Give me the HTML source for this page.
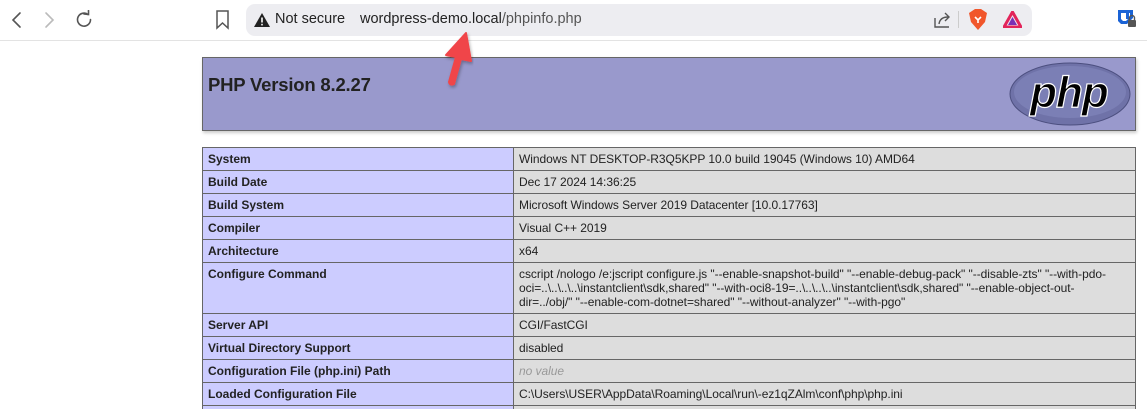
<!DOCTYPE html>
<html><head><meta charset="utf-8">
<style>
html,body{margin:0;padding:0;width:1147px;height:409px;overflow:hidden;background:#fff;font-family:"Liberation Sans",Arial,sans-serif;position:relative}
.bar{position:absolute;left:0;top:0;width:1147px;height:40px;background:#fff;border-bottom:1px solid #e3e3e3}
.pill{position:absolute;left:246px;top:4px;width:786px;height:32px;border-radius:9px;background:#ededf1}
.ns{position:absolute;left:275px;top:11px;font-size:14.5px;color:#222}
.url{position:absolute;left:360px;top:11px;font-size:14.5px;color:#222}
.url span{color:#555}
.head{position:absolute;left:202px;top:57px;width:932px;height:72px;background:#9999cc;border:1px solid #666;box-shadow:1px 2px 3px #ccc}
.head h1{margin:0;position:absolute;left:5px;top:16px;font-size:18.5px;font-weight:bold;color:#222;letter-spacing:-0.2px}
table{position:absolute;left:202px;top:147px;border-collapse:collapse;width:934px;font-size:12px;letter-spacing:-0.05px}
td{border:1px solid #666;padding:4px 5px 4px 5px;vertical-align:top;height:14px;line-height:14px;color:#222}
td.e{background:#ccf;font-weight:bold;width:300px;letter-spacing:0}
td.v{background:#ddd}
i{color:#999}
</style></head><body>
<div class="bar">
<svg style="position:absolute;left:8px;top:10px" width="100" height="20" viewBox="0 0 100 20" fill="none" stroke-width="1.6" stroke-linecap="round">
<path d="M12 3 L5 10 L12 17" stroke="#555"/>
<path d="M38 3 L45 10 L38 17" stroke="#bbb"/>
<path d="M80 4.5 A6.5 6.5 0 1 0 82.5 9.5" stroke="#555"/><path d="M76 4 L80.5 4.5 L80.5 0.5" stroke="#555"/>
</svg>
<svg style="position:absolute;left:214px;top:9px" width="18" height="22" viewBox="0 0 18 22" fill="none" stroke="#555" stroke-width="1.5"><path d="M3 2 H14 V19 L8.5 14 L3 19 Z"/></svg>
<div class="pill"></div>
<svg style="position:absolute;left:254px;top:13px" width="16" height="14" viewBox="0 0 16 14"><path d="M8 0 L16 14 H0 Z" fill="#222"/><rect x="7.2" y="4.5" width="1.6" height="5" fill="#fff"/><rect x="7.2" y="10.8" width="1.6" height="1.6" fill="#fff"/></svg>
<div class="ns">Not secure</div>
<div class="url">wordpress-demo.local<span>/phpinfo.php</span></div>
<svg style="position:absolute;left:933px;top:11px" width="20" height="18" viewBox="0 0 20 18" fill="none" stroke="#555" stroke-width="1.4"><path d="M2 7 V16 H16"/><path d="M6 13 Q7 6 15 6"/><path d="M12 2 L16 6 L12 10"/></svg>
<div style="position:absolute;left:958px;top:11px;width:1px;height:17px;background:#ccc"></div>
<svg style="position:absolute;left:969px;top:9px" width="18" height="21" viewBox="0 0 18 21"><path d="M3 2 L6 0 H12 L15 2 L18 4 L16 13 L9 21 L2 13 L0 4 Z" fill="#f1562b"/><path d="M6 8 L9 11 L12 8 M9 11 V14" stroke="#fff" stroke-width="1.6" fill="none"/></svg>
<svg style="position:absolute;left:1003px;top:11px" width="19" height="17" viewBox="0 0 19 17"><path d="M9.5 1 L18 16 H1 Z" fill="none" stroke="#e2245a" stroke-width="3"/><path d="M9.5 6 L14 14 H5 Z" fill="#7a2fb5"/></svg>
<svg style="position:absolute;left:1117px;top:9px" width="19" height="19" viewBox="0 0 19 19"><path d="M1 1 H16 V9 L10 15 H4 L1 12 Z" fill="#1a63d6"/><path d="M4 4 H13 V8 L9 12 H6 L4 10 Z" fill="#fff"/><rect x="9" y="4" width="3" height="6" fill="#1a63d6"/><rect x="11" y="11" width="8" height="7" rx="1" fill="#555"/><path d="M12.5 11 V9 A2.5 2.5 0 0 1 17.5 9 V11" stroke="#555" stroke-width="1.4" fill="none"/></svg>
</div>
<div class="head"><h1>PHP Version 8.2.27</h1>
<svg style="position:absolute;left:806px;top:4px" width="122" height="64" viewBox="0 0 122 64"><ellipse cx="61" cy="32" rx="60" ry="31" fill="#6f72a8" stroke="#4c4f7f" stroke-width="1"/><ellipse cx="61" cy="30" rx="56" ry="26" fill="#7b7fb5"/><text x="60" y="45" text-anchor="middle" font-family="Liberation Sans,Arial,sans-serif" font-size="44" font-weight="bold" font-style="italic" fill="#000" stroke="#fff" stroke-width="1.2" letter-spacing="-1">php</text></svg>
</div>
<svg style="position:absolute;left:0;top:0;pointer-events:none" width="1147" height="409"><g filter="url(#s)"><path d="M466 33 L446 55 L456 57 L449 82 Q450 86 454 84 L461 59 L471 61 Z" fill="#f0454a" stroke="#f0454a" stroke-linejoin="round" stroke-width="2"/></g><defs><filter id="s"><feDropShadow dx="1" dy="2" stdDeviation="1.5" flood-opacity="0.3"/></filter></defs></svg>
<table>
<tr><td class="e">System</td><td class="v">Windows NT DESKTOP-R3Q5KPP 10.0 build 19045 (Windows 10) AMD64</td></tr>
<tr><td class="e">Build Date</td><td class="v">Dec 17 2024 14:36:25</td></tr>
<tr><td class="e">Build System</td><td class="v">Microsoft Windows Server 2019 Datacenter [10.0.17763]</td></tr>
<tr><td class="e">Compiler</td><td class="v">Visual C++ 2019</td></tr>
<tr><td class="e">Architecture</td><td class="v">x64</td></tr>
<tr><td class="e" style="height:42px">Configure Command</td><td class="v" style="white-space:nowrap">cscript /nologo /e:jscript configure.js "--enable-snapshot-build" "--enable-debug-pack" "--disable-zts" "--with-pdo-<br>oci=..\..\..\..\instantclient\sdk,shared" "--with-oci8-19=..\..\..\..\instantclient\sdk,shared" "--enable-object-out-<br>dir=../obj/" "--enable-com-dotnet=shared" "--without-analyzer" "--with-pgo"</td></tr>
<tr><td class="e">Server API</td><td class="v">CGI/FastCGI</td></tr>
<tr><td class="e">Virtual Directory Support</td><td class="v">disabled</td></tr>
<tr><td class="e">Configuration File (php.ini) Path</td><td class="v"><i>no value</i></td></tr>
<tr><td class="e">Loaded Configuration File</td><td class="v">C:\Users\USER\AppData\Roaming\Local\run\-ez1qZAlm\conf\php\php.ini</td></tr>
<tr><td class="e">&nbsp;</td><td class="v">&nbsp;</td></tr>
</table>
</body></html>
